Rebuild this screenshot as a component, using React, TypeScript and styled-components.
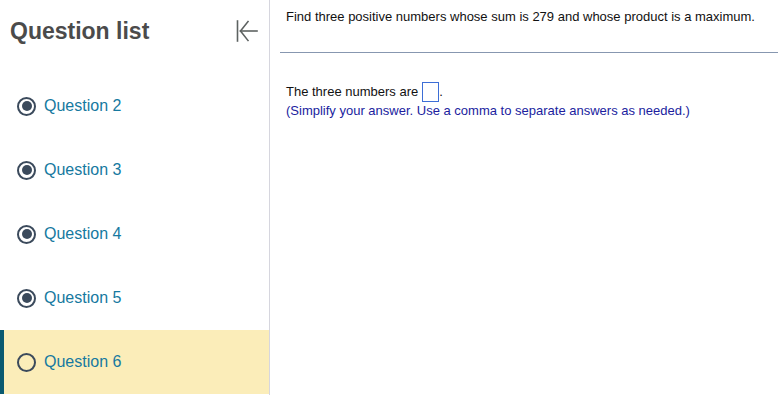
import React from 'react';
import styled, { createGlobalStyle } from 'styled-components';

const GlobalStyle = createGlobalStyle`
  html, body {
    margin: 0;
    padding: 0;
    background: #ffffff;
    font-family: "Liberation Sans", Arial, sans-serif;
  }
`;

const Page = styled.div`
  display: flex;
  width: 778px;
  height: 395px;
  overflow: hidden;
`;

const Sidebar = styled.aside`
  width: 269px;
  flex-shrink: 0;
  border-right: 1px solid #d6d6de;
  display: flex;
  flex-direction: column;
`;

const SidebarHeader = styled.div`
  height: 74px;
  display: flex;
  align-items: flex-start;
  justify-content: space-between;
  padding: 18px 11px 0 10px;
  box-sizing: border-box;

  h2 {
    margin: 0;
    font-size: 23px;
    font-weight: 700;
    color: #4b4b4b;
    line-height: 26px;
  }
`;

const CollapseButton = styled.button`
  border: none;
  background: none;
  padding: 0;
  margin: 2px 0 0 0;
  width: 22px;
  height: 22px;
  cursor: pointer;
  color: #5d6261;
`;

const RowList = styled.div`
  display: flex;
  flex-direction: column;
`;

const Row = styled.div<{ $active?: boolean }>`
  height: 64px;
  display: flex;
  align-items: center;
  gap: 8px;
  padding-left: 13px;
  box-sizing: border-box;
  background: ${(p) => (p.$active ? '#fbedb9' : 'transparent')};
  border-left: 4px solid ${(p) => (p.$active ? '#0b5a70' : 'transparent')};
`;

const Radio = styled.span<{ $done?: boolean }>`
  width: 19px;
  height: 19px;
  border-radius: 50%;
  border: 2.5px solid #3b4a5c;
  box-sizing: border-box;
  display: flex;
  align-items: center;
  justify-content: center;

  &::after {
    content: '';
    width: 10px;
    height: 10px;
    border-radius: 50%;
    background: ${(p) => (p.$done ? '#3b4a5c' : 'transparent')};
  }
`;

const RowLabel = styled.span`
  font-size: 16px;
  color: #1679a0;
`;

const Main = styled.main`
  flex: 1;
  padding-top: 9px;
`;

const Prompt = styled.p`
  margin: 0 0 0 16px;
  font-size: 13px;
  line-height: 16px;
  color: #111;
  height: 43px;
`;

const Divider = styled.hr`
  margin: 0 0 0 10px;
  border: none;
  border-top: 1px solid #8797b0;
`;

const Answer = styled.div`
  margin: 29px 0 0 16px;
  font-size: 13px;
  color: #111;
  line-height: 20px;
  display: flex;
  align-items: flex-end;
`;

const AnswerBox = styled.span`
  display: inline-block;
  width: 17px;
  height: 20px;
  box-sizing: border-box;
  border: 1px solid #3d6ed6;
  margin-left: 4px;
`;

const Hint = styled.div`
  margin: 0 0 0 16px;
  font-size: 13px;
  line-height: 17px;
  color: #201d9e;
`;

const questions = [
  { n: 2, done: true },
  { n: 3, done: true },
  { n: 4, done: true },
  { n: 5, done: true },
  { n: 6, done: false, active: true },
];

export default function App() {
  return (
    <>
      <GlobalStyle />
      <Page>
        <Sidebar>
          <SidebarHeader>
            <h2>Question list</h2>
            <CollapseButton aria-label="Collapse">
              <svg width="22" height="22" viewBox="0 0 22 22" fill="none" stroke="currentColor" strokeWidth="1.6" strokeLinecap="square">
                <path d="M1.5 1v20" />
                <path d="M12 1.5 4.5 11l7.5 9.5" />
                <path d="M4.5 11H21" />
              </svg>
            </CollapseButton>
          </SidebarHeader>
          <RowList>
            {questions.map((q) => (
              <Row key={q.n} $active={q.active}>
                <Radio $done={q.done} />
                <RowLabel>Question {q.n}</RowLabel>
              </Row>
            ))}
          </RowList>
        </Sidebar>
        <Main>
          <Prompt>Find three positive numbers whose sum is 279 and whose product is a maximum.</Prompt>
          <Divider />
          <Answer>
            The three numbers are
            <AnswerBox />.
          </Answer>
          <Hint>(Simplify your answer. Use a comma to separate answers as needed.)</Hint>
        </Main>
      </Page>
    </>
  );
}
